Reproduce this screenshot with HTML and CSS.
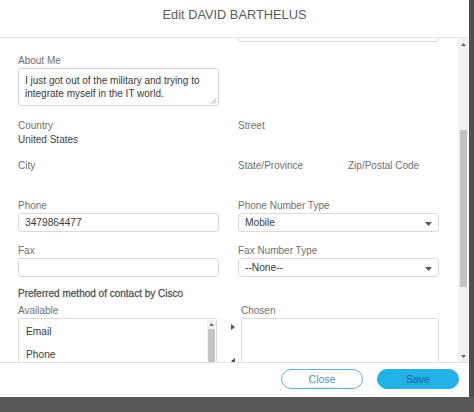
FILE: index.html
```html
<!DOCTYPE html>
<html>
<head>
<meta charset="utf-8">
<link rel="stylesheet" href="styles.css">
</head>
<body>
<div class="page">
  <div class="modal">
    <header class="modal-header"><h1>Edit DAVID BARTHELUS</h1></header>
    <div class="modal-body">
      <div class="viewport">
        <div class="form">
          <div class="row first">
            <div></div>
            <div class="input"></div>
          </div>
          <div class="row about">
            <div class="field">
              <div class="label">About Me</div>
              <div class="textarea">I just got out of the military and trying to<br>integrate myself in the IT world.<svg class="grip" width="6" height="6" viewBox="0 0 6 6"><path d="M5.5 0.5 L0.5 5.5 M5.5 3 L3 5.5" stroke="#9a9a9a" stroke-width="0.8"/></svg></div>
            </div>
            <div></div>
          </div>
          <div class="row country">
            <div class="field">
              <div class="label">Country</div>
              <div class="value">United States</div>
            </div>
            <div class="field">
              <div class="label">Street</div>
              <div class="value"></div>
            </div>
          </div>
          <div class="row city">
            <div class="field">
              <div class="label">City</div>
              <div class="value"></div>
            </div>
            <div class="split">
              <div class="field">
                <div class="label">State/Province</div>
                <div class="value"></div>
              </div>
              <div class="field">
                <div class="label">Zip/Postal Code</div>
                <div class="value"></div>
              </div>
            </div>
          </div>
          <div class="row phone">
            <div class="field">
              <div class="label">Phone</div>
              <div class="input">3479864477</div>
            </div>
            <div class="field">
              <div class="label">Phone Number Type</div>
              <div class="input select">Mobile<svg class="caret" width="7" height="4" viewBox="0 0 7 4"><path d="M0 0 H7 L3.5 4 Z" fill="#555"/></svg></div>
            </div>
          </div>
          <div class="row fax">
            <div class="field">
              <div class="label">Fax</div>
              <div class="input"></div>
            </div>
            <div class="field">
              <div class="label">Fax Number Type</div>
              <div class="input select">--None--<svg class="caret" width="7" height="4" viewBox="0 0 7 4"><path d="M0 0 H7 L3.5 4 Z" fill="#555"/></svg></div>
            </div>
          </div>
          <div class="contact">
            <div class="section-title">Preferred method of contact by Cisco</div>
            <div class="dual">
              <div class="field">
                <div class="label">Available</div>
                <div class="listbox">
                  <div class="options">
                    <div class="option">Email</div>
                    <div class="option">Phone</div>
                  </div>
                  <div class="mini-scroll">
                    <svg class="mini-up" width="5" height="3" viewBox="0 0 5 3"><path d="M0 3 H5 L2.5 0 Z" fill="#777"/></svg>
                    <div class="mini-thumb"></div>
                  </div>
                </div>
              </div>
              <div class="movers">
                <svg width="4" height="6" viewBox="0 0 4 6"><path d="M0 0 L4 3 L0 6 Z" fill="#555"/></svg>
                <svg width="4" height="6" viewBox="0 0 4 6"><path d="M4 0 L0 3 L4 6 Z" fill="#555"/></svg>
              </div>
              <div class="field">
                <div class="label">Chosen</div>
                <div class="listbox empty"></div>
              </div>
            </div>
          </div>
        </div>
      </div>
      <div class="scrollbar">
        <div class="sb-btn"><svg width="5" height="3" viewBox="0 0 5 3"><path d="M0 3 H5 L2.5 0 Z" fill="#666"/></svg></div>
        <div class="sb-track"><div class="sb-thumb"></div></div>
        <div class="sb-btn"><svg width="5" height="3" viewBox="0 0 5 3"><path d="M0 0 H5 L2.5 3 Z" fill="#666"/></svg></div>
      </div>
    </div>
    <footer class="modal-footer">
      <button class="btn btn-close">Close</button>
      <button class="btn btn-save">Save</button>
    </footer>
  </div>
  <div class="backdrop-edge"></div>
</div>
</body>
</html>
```
FILE: styles.css
```css
* { box-sizing: border-box; margin: 0; padding: 0; }
html, body { width: 474px; height: 412px; overflow: hidden; }
body {
  background: #585858;
  font-family: "Liberation Sans", Arial, sans-serif;
  color: #3a3a3a;
}
.page { display: flex; height: 412px; }
.modal {
  width: 469px;
  height: 397px;
  background: #fff;
  display: flex;
  flex-direction: column;
  flex: none;
}
.backdrop-edge { flex: 1; background: #4e4e4e; height: 397px; }

.modal-header {
  height: 38px;
  border-bottom: 1px solid #e3e3e3;
  display: flex;
  justify-content: center;
  padding-top: 7px;
}
.modal-header h1 {
  font-size: 12.8px;
  line-height: 15px;
  font-weight: normal;
  color: #5c5c5c;
}

.modal-body {
  height: 324px;
  display: flex;
  flex: none;
}
.viewport {
  flex: 1;
  overflow: hidden;
  padding: 0 19px 0 18px;
}
.form {
  display: flex;
  flex-direction: column;
  gap: 12px;
  margin-top: -15px;
}
.row {
  display: grid;
  grid-template-columns: 201px 201px;
  column-gap: 19px;
}
.row.country { margin-top: 1px; }
.row.city { margin-top: 1px; }
.row.phone { margin-top: 1px; }
.split {
  display: grid;
  grid-template-columns: 91px 91px;
  column-gap: 19px;
}
.field { display: flex; flex-direction: column; }
.label {
  font-size: 10px;
  line-height: 13px;
  color: #707070;
  margin-bottom: 1px;
}
.value {
  font-size: 10px;
  line-height: 13px;
  height: 13px;
  color: #444;
}
.input {
  height: 19px;
  border: 1px solid #dadada;
  border-radius: 3px;
  font-size: 10.2px;
  line-height: 17px;
  padding-left: 6px;
  color: #3a3a3a;
}
.select { display: flex; align-items: center; justify-content: space-between; padding-right: 6px; }
.caret { flex: none; margin-top: 2px; }
.textarea {
  height: 38px;
  border: 1px solid #d4d4d4;
  border-radius: 3px;
  font-size: 10px;
  line-height: 13px;
  padding: 5px 6px 0 6px;
  color: #3a3a3a;
  position: relative;
}
.grip { position: absolute; right: 1px; bottom: 1px; }

.contact { display: flex; flex-direction: column; margin-top: -2px; }
.section-title {
  font-size: 10px;
  line-height: 13px;
  font-weight: normal;
  -webkit-text-stroke: 0.3px #555;
  color: #555;
  margin-bottom: 4px;
}
.dual {
  display: grid;
  grid-template-columns: 199px 24px 198px;
}
.listbox {
  height: 80px;
  border: 1px solid #dcdcdc;
  border-radius: 2px;
  display: flex;
}
.options { flex: 1; padding-top: 1px; }
.option {
  font-size: 10.2px;
  line-height: 23px;
  padding-left: 7px;
  color: #3a3a3a;
}
.mini-scroll {
  width: 8px;
  margin: 1px 1px 0 0;
  background: #f2f2f2;
  display: flex;
  flex-direction: column;
  align-items: center;
}
.mini-up { margin-top: 3px; }
.mini-thumb {
  width: 7px;
  height: 60px;
  margin-top: 3px;
  background: #c4c4c4;
}
.movers {
  display: flex;
  flex-direction: column;
  align-items: center;
  padding: 20px 0 0 8px;
  gap: 28px;
  width: 24px;
}

.scrollbar {
  width: 10px;
  margin-right: 1px;
  background: #f1f1f1;
  display: flex;
  flex-direction: column;
}
.sb-btn {
  height: 12px;
  display: flex;
  align-items: center;
  justify-content: center;
}
.sb-track { flex: 1; padding: 0 1.5px 0 1.5px; }
.sb-thumb {
  margin-top: 80px;
  height: 157px;
  background: #c3c3c3;
}

.modal-footer {
  height: 35px;
  border-top: 1px solid #e0e0e0;
  display: flex;
  justify-content: flex-end;
  align-items: flex-start;
  padding: 6px 10px 0 0;
  gap: 14px;
}
.btn {
  width: 82px;
  height: 20px;
  border-radius: 10px;
  font-family: "Liberation Sans", Arial, sans-serif;
  font-size: 10.5px;
  line-height: 18px;
  cursor: pointer;
}
.btn-close {
  background: #fff;
  border: 1px solid #5fb0e2;
  color: #4b93cc;
}
.btn-save {
  background: #22b2e8;
  border: 1px solid #22b2e8;
  color: #1c5f92;
}
```
